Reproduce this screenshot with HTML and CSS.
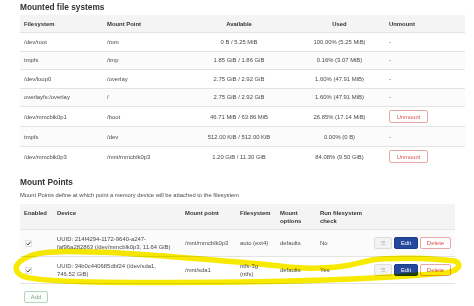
FILE: index.html
```html
<!DOCTYPE html>
<html>
<head>
<meta charset="utf-8">
<link rel="stylesheet" href="styles.css">
</head>
<body>
<div class="page">
  <h3 class="title">Mounted file systems</h3>
  <table class="tbl fs">
    <colgroup><col class="w83"><col class="w81"><col class="w110"><col class="w91"><col class="w80"></colgroup>
    <thead>
      <tr><th>Filesystem</th><th>Mount Point</th><th class="c">Available</th><th class="c">Used</th><th>Unmount</th></tr>
    </thead>
    <tbody>
      <tr><td>/dev/root</td><td>/rom</td><td class="c">0 B / 5.25 MiB</td><td class="c">100.00% (5.25 MiB)</td><td>-</td></tr>
      <tr class="alt"><td>tmpfs</td><td>/tmp</td><td class="c">1.85 GiB / 1.86 GiB</td><td class="c">0.16% (3.07 MiB)</td><td>-</td></tr>
      <tr><td>/dev/loop0</td><td>/overlay</td><td class="c">2.75 GiB / 2.92 GiB</td><td class="c">1.60% (47.91 MiB)</td><td>-</td></tr>
      <tr class="alt"><td>overlayfs:/overlay</td><td>/</td><td class="c">2.75 GiB / 2.92 GiB</td><td class="c">1.60% (47.91 MiB)</td><td>-</td></tr>
      <tr class="tall"><td>/dev/mmcblk0p1</td><td>/boot</td><td class="c">46.71 MiB / 63.86 MiB</td><td class="c">26.85% (17.14 MiB)</td><td><button class="btn neg unmount">Unmount</button></td></tr>
      <tr class="alt tall"><td>tmpfs</td><td>/dev</td><td class="c">512.00 KiB / 512.00 KiB</td><td class="c">0.00% (0 B)</td><td>-</td></tr>
      <tr class="tall"><td>/dev/mmcblk0p3</td><td>/mnt/mmcblk0p3</td><td class="c">1.20 GiB / 11.30 GiB</td><td class="c">84.08% (9.50 GiB)</td><td><button class="btn neg unmount">Unmount</button></td></tr>
    </tbody>
  </table>

  <h3 class="title t2">Mount Points</h3>
  <p class="desc">Mount Points define at which point a memory device will be attached to the filesystem</p>

  <table class="tbl mp">
    <colgroup><col class="w33"><col class="w128"><col class="w55"><col class="w40"><col class="w40"><col class="w54"><col class="w85"></colgroup>
    <thead>
      <tr><th>Enabled</th><th>Device</th><th>Mount point</th><th>Filesystem</th><th>Mount<br>options</th><th>Run filesystem<br>check</th><th></th></tr>
    </thead>
    <tbody>
      <tr class="alt">
        <td><svg class="cb" width="7" height="7" viewBox="0 0 7 7"><rect x="0.5" y="0.5" width="6" height="6" fill="#fff" stroke="#e2e2e2"/><path d="M1.4 3.6 L2.9 5 L5.6 1.8" fill="none" stroke="#333" stroke-width="1"/></svg></td>
        <td>UUID: 214f4294-1172-9640-a247-<br>faf96a282863 (/dev/mmcblk0p3, 11.64 GiB)</td>
        <td>/mnt/mmcblk0p3</td>
        <td>auto (ext4)</td>
        <td>defaults</td>
        <td>No</td>
        <td><div class="acts"><button class="btn handle">☰</button><button class="btn edit">Edit</button><button class="btn neg del">Delete</button></div></td>
      </tr>
      <tr>
        <td><svg class="cb" width="7" height="7" viewBox="0 0 7 7"><rect x="0.5" y="0.5" width="6" height="6" fill="#fff" stroke="#e2e2e2"/><path d="M1.4 3.6 L2.9 5 L5.6 1.8" fill="none" stroke="#333" stroke-width="1"/></svg></td>
        <td>UUID: 34b0c440685dbf24 (/dev/sda1,<br>746.52 GiB)</td>
        <td>/mnt/sda1</td>
        <td>ntfs-3g<br>(ntfs)</td>
        <td>defaults</td>
        <td>Yes</td>
        <td><div class="acts"><button class="btn handle">☰</button><button class="btn edit">Edit</button><button class="btn neg del">Delete</button></div></td>
      </tr>
    </tbody>
  </table>
  <button class="btn add">Add</button>
</div>

<svg class="hl" width="474" height="306" viewBox="0 0 474 306">
  <path d="M350 265 C330 269 300 269 280 266 C240 262 180 257 120 253 C80 251 45 250 30 256 C15 262 12 270 22 276 C40 283 120 283 240 282 C320 281 400 277 445 273 C458 271 463 265 455 261 C430 258 392 257 372 260 C362 262 356 264 350 265 Z" fill="none" stroke="#f7ea00" stroke-width="5.5" stroke-linejoin="round"/>
</svg>
</body>
</html>
```

FILE: styles.css
```css
html, body {
  margin: 0;
  background: #fff;
}
body {
  font-family: "Liberation Sans", Arial, sans-serif;
  color: #4a4a4a;
  position: relative;
  width: 474px;
  height: 306px;
  overflow: hidden;
}
.page {
  padding-left: 20px;
}
.title {
  margin: 0;
  font-size: 8.3px;
  line-height: 15px;
  font-weight: bold;
  color: #333;
}
.t2 {
  margin-top: 9px;
  font-size: 8.4px;
}
.desc {
  margin: 1px 0 0;
  font-size: 5.8px;
  line-height: 8px;
  color: #4a4a4a;
}
.tbl {
  border-collapse: collapse;
  table-layout: fixed;
  font-size: 5.9px;
  line-height: 8px;
}
.tbl th {
  background: #f4f4f4;
  font-weight: bold;
  color: #333;
  text-align: left;
  padding: 0 4px;
  white-space: nowrap;
}
.tbl td {
  padding: 0 4px;
  border-top: 1px solid #e4e4e4;
  white-space: nowrap;
  vertical-align: middle;
}
.tbl .c {
  text-align: center;
}
.tbl tr.alt td {
  background: #fbfbfb;
}
.fs {
  width: 445px;
}
.fs th {
  height: 17px;
}
.fs td {
  height: 17.5px;
}
.fs tr.tall td {
  height: 19px;
}
.mp {
  width: 435px;
  margin-top: 5px;
}
.mp th {
  vertical-align: top;
  padding: 5px 4px 4px;
}
.mp td {
  padding: 5px 4px;
}
.mp tbody tr:last-child td {
  border-bottom: 1px solid #e4e4e4;
}
.w83 { width: 83px; }
.w81 { width: 81px; }
.w110 { width: 110px; }
.w91 { width: 91px; }
.w80 { width: 80px; }
.w33 { width: 33px; }
.w128 { width: 128px; }
.w55 { width: 55px; }
.w40 { width: 40px; }
.w54 { width: 54px; }
.w85 { width: 85px; }
.cb {
  display: block;
  margin-left: 1px;
}
.btn {
  font-family: "Liberation Sans", Arial, sans-serif;
  font-size: 5.8px;
  box-sizing: border-box;
  margin: 0;
  padding: 0;
  border: 1px solid #ccc;
  border-radius: 2px;
  background: #fff;
  display: inline-flex;
  align-items: center;
  justify-content: center;
  vertical-align: middle;
}
.neg {
  border-color: #eba7a7;
  color: #d9534f;
}
.unmount {
  width: 39px;
  height: 13px;
}
.acts {
  display: flex;
  gap: 2px;
}
.acts .btn {
  height: 12px;
}
.handle {
  width: 18px;
  background: #f3f3f3;
  border-color: #dcdcdc;
  color: #aaa;
  font-size: 5px;
}
.edit {
  width: 24px;
  background: #24489b;
  border-color: #1d3d88;
  color: #fff;
}
.del {
  width: 31px;
  font-size: 6px;
}
.add {
  margin: 7px 0 0 4px;
  width: 24px;
  height: 12px;
  border-color: #b6d3c1;
  color: #7fa68d;
  background: #fbfdfb;
}
.hl {
  position: absolute;
  left: 0;
  top: 0;
  pointer-events: none;
  mix-blend-mode: multiply;
}
```
